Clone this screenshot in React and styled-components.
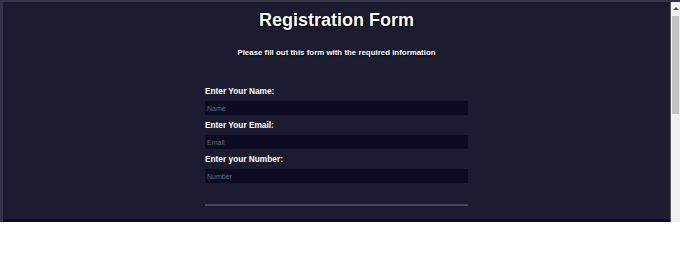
import React from "react";
import styled, { createGlobalStyle } from "styled-components";

const Global = createGlobalStyle`
  html, body { margin: 0; padding: 0; background: #ffffff; }
  body { font-family: "Liberation Sans", Arial, sans-serif; }
  * { box-sizing: border-box; }
`;

const Frame = styled.div`
  width: 680px;
  height: 222px;
  display: flex;
  flex-direction: column;
  background: #1c1c30;
`;

const TopEdge = styled.div`
  height: 2px;
  background: #35354a;
  flex: none;
`;

const Body = styled.div`
  flex: 1;
  display: flex;
  min-height: 0;
`;

const LeftEdge = styled.div`
  width: 3px;
  background: #34344a;
  flex: none;
`;

const Main = styled.main`
  flex: 1;
  display: flex;
  flex-direction: column;
  align-items: center;
  background: #1c1c30;
  border-bottom: 3px solid #0b0b2a;
`;

const Title = styled.h1`
  margin: 6px 0 0;
  font-size: 18px;
  line-height: 24px;
  font-weight: 700;
  color: #ffffff;
  text-shadow: 1px 1px 1px #000000, -1px 0 1px #000000;
`;

const Subtitle = styled.p`
  margin: 15px 0 0;
  font-size: 7.9px;
  line-height: 11px;
  font-weight: 700;
  color: #ffffff;
  text-shadow: 1px 1px 1px #000000;
`;

const Form = styled.form`
  width: 263px;
  margin-top: 27px;
  display: flex;
  flex-direction: column;
`;

const Label = styled.label`
  display: block;
  font-size: 8.3px;
  line-height: 12px;
  font-weight: 700;
  color: #ffffff;
  margin-top: ${(p) => (p.$first ? "0" : "4px")};
  margin-bottom: 4px;
`;

const Input = styled.input`
  display: block;
  width: 100%;
  height: 14px;
  border: none;
  outline: none;
  padding: 0 2px;
  background: #0b0b22;
  color: #cccccc;
  font-family: inherit;
  font-size: 7px;
  &::placeholder { color: #6a6a78; }
`;

const Divider = styled.hr`
  width: 100%;
  height: 2px;
  border: none;
  background: #44445a;
  margin: 21px 0 0;
`;

const Scrollbar = styled.div`
  width: 10px;
  flex: none;
  background: #f0f0f0;
  border-left: 1px solid #5a5a66;
  display: flex;
  flex-direction: column;
  align-items: center;
  padding-top: 3px;
`;

const Arrow = styled.div`
  width: 0;
  height: 0;
  border-left: 3px solid transparent;
  border-right: 3px solid transparent;
  border-bottom: 3px solid #505050;
  margin-top: 2px;
`;

const Thumb = styled.div`
  width: 7px;
  height: 98px;
  background: #c1c1c1;
  margin-top: 6px;
`;

const fields = [
  { label: "Enter Your Name:", placeholder: "Name", type: "text" },
  { label: "Enter Your Email:", placeholder: "Email", type: "email" },
  { label: "Enter your Number:", placeholder: "Number", type: "tel" },
];

export default function App() {
  return (
    <>
      <Global />
      <Frame>
        <TopEdge />
        <Body>
          <LeftEdge />
          <Main>
            <Title>Registration Form</Title>
            <Subtitle>Please fill out this form with the required information</Subtitle>
            <Form onSubmit={(e) => e.preventDefault()}>
              {fields.map((f, i) => (
                <React.Fragment key={f.placeholder}>
                  <Label $first={i === 0}>{f.label}</Label>
                  <Input type={f.type} placeholder={f.placeholder} />
                </React.Fragment>
              ))}
              <Divider />
            </Form>
          </Main>
          <Scrollbar>
            <Arrow />
            <Thumb />
          </Scrollbar>
        </Body>
      </Frame>
    </>
  );
}
